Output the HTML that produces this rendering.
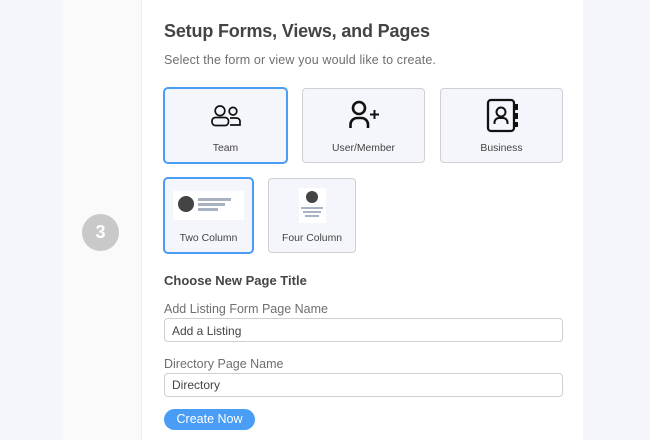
<!DOCTYPE html>
<html><head><meta charset="utf-8"><style>
html,body{margin:0;padding:0}
body{width:650px;height:440px;position:relative;overflow:hidden;background:#f5f6fc;font-family:"Liberation Sans",sans-serif;color:#444}
div,svg{position:absolute;box-sizing:border-box}
.t{white-space:nowrap;line-height:16px}
.card{background:#f5f6fb;border:1px solid #cfd0d6;border-radius:4px}
.sel{border:2px solid #4a9df5;border-radius:5px}
.lab{font-size:10.4px;color:#444;text-align:center;line-height:12px}
.inp{left:164px;width:399px;height:24px;border:1px solid #cfcfd2;border-radius:4px;background:#fff;font-size:12px;line-height:23px;padding-left:7px;color:#444}
.fl{left:164px;font-size:12.5px;color:#6f6f6f}
</style></head><body>
<div style="left:62px;top:0;width:80px;height:440px;background:#fafafa;border-right:1px solid #eee"></div>
<div style="left:142px;top:0;width:441px;height:440px;background:#fff"></div>
<div style="left:82px;top:214px;width:37px;height:37px;border-radius:50%;background:#c9c9c9;color:#fff;font-weight:bold;font-size:18px;line-height:37px;text-align:center">3</div>

<div class="t" style="left:164px;top:21px;font-size:18px;font-weight:bold;color:#444;line-height:20px;letter-spacing:-.17px">Setup Forms, Views, and Pages</div>
<div class="t" style="left:164px;top:52px;font-size:12.5px;color:#6f6f6f;letter-spacing:.15px">Select the form or view you would like to create.</div>

<div class="card sel" style="left:163px;top:87px;width:125px;height:77px"></div>
<svg style="left:210px;top:104px" width="32" height="24" viewBox="0 0 32 24" fill="none" stroke="#111" stroke-width="1.700"><circle cx="10" cy="6.800" r="4.800"/><circle cx="23" cy="7.200" r="3.800"/><rect x="2" y="13.500" width="16.500" height="8" rx="3.500"/><path d="M20 14h6.500a3.500 3.500 0 0 1 3.500 3.500v3.500h-10"/></svg>
<div class="lab" style="left:163px;top:143px;width:125px">Team</div>

<div class="card" style="left:302px;top:88px;width:123px;height:75px"></div>
<svg style="left:347px;top:100px" width="34" height="30" viewBox="0 0 34 30" fill="none" stroke="#111" stroke-width="2.600"><circle cx="12" cy="8" r="6"/><path d="M3.500 28v-3.500a6.500 6.500 0 0 1 6.500-6.500h4.500a6.500 6.500 0 0 1 6.500 6.500v3.500"/><path d="M23 14.500h9M27.500 10v9" stroke-width="2"/></svg>
<div class="lab" style="left:302px;top:143px;width:123px">User/Member</div>

<div class="card" style="left:440px;top:88px;width:123px;height:75px"></div>
<svg style="left:485px;top:97px" width="34" height="38" viewBox="0 0 34 38" fill="none" stroke="#111" stroke-width="2"><rect x="3" y="3" width="26" height="31" rx="3" stroke-width="2.300"/><circle cx="16" cy="15" r="4.500"/><path d="M9.500 27v-1.500a4.500 4.500 0 0 1 4.500-4.500h4a4.500 4.500 0 0 1 4.500 4.500v1.500"/><path d="M31.500 7v6M31.500 16v6M31.500 25v5" stroke-width="3"/></svg>
<div class="lab" style="left:440px;top:143px;width:123px">Business</div>

<div class="card sel" style="left:163px;top:177px;width:91px;height:77px"></div>
<div style="left:173px;top:191px;width:71px;height:29px;background:#fff"></div>
<div style="left:178px;top:196px;width:16px;height:16px;border-radius:50%;background:#444"></div>
<div style="left:198px;top:198px;width:33px;height:3px;background:#a8b2c0"></div>
<div style="left:198px;top:203px;width:27px;height:3px;background:#a8b2c0"></div>
<div style="left:198px;top:208px;width:20px;height:3px;background:#a8b2c0"></div>
<div class="lab" style="left:163px;top:233px;width:91px">Two Column</div>

<div class="card" style="left:268px;top:178px;width:88px;height:75px"></div>
<div style="left:299px;top:188px;width:27px;height:35px;background:#fff"></div>
<div style="left:306px;top:191px;width:12px;height:12px;border-radius:50%;background:#444"></div>
<div style="left:301px;top:207px;width:22px;height:2px;background:#a8b2c0"></div>
<div style="left:303px;top:211px;width:18px;height:2px;background:#a8b2c0"></div>
<div style="left:305px;top:215px;width:14px;height:2px;background:#a8b2c0"></div>
<div class="lab" style="left:268px;top:233px;width:88px">Four Column</div>

<div class="t" style="left:164px;top:273px;font-size:13px;font-weight:bold;color:#444">Choose New Page Title</div>
<div class="t fl" style="top:301px">Add Listing Form Page Name</div>
<div class="inp" style="top:318px;line-height:25px">Add a Listing</div>
<div class="t fl" style="top:356px">Directory Page Name</div>
<div class="inp" style="top:373px">Directory</div>
<div style="left:164px;top:409px;width:91px;height:21px;border-radius:11px;background:#4a9df5;color:#fff;font-size:12.5px;line-height:21px;text-align:center">Create Now</div>
</body></html>
